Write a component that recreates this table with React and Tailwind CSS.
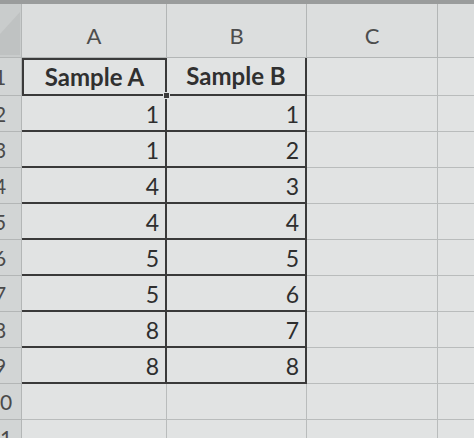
import React from "react";

const colA = ["1", "1", "4", "4", "5", "5", "8", "8"];
const colB = ["1", "2", "3", "4", "5", "6", "7", "8"];

const font = { fontFamily: "Lato, 'Open Sans', sans-serif" };

const RowNum = ({ n }) => (
  <div className="overflow-hidden bg-[#d2d5d5] border-r border-b border-[#b3b6b6] flex items-center">
    <div className="w-[44px] -ml-[22px] shrink-0 text-center text-[21px] text-[#4a4a4a]">{n}</div>
  </div>
);

const Plain = ({ last }) => (
  <div className={"bg-[#e1e3e3] border-b border-[#b9bcbc] " + (last ? "" : "border-r")} />
);

export default function App() {
  const rows = [];
  colA.forEach((a, i) => {
    rows.push(
      <React.Fragment key={i}>
        <RowNum n={i + 2} />
        <div className="bg-[#e1e3e3] border-b-2 border-r-2 border-b-[#3a3a3a] border-r-[#3a3a3a] flex items-center justify-end pr-[6px] pt-[2px] text-[23px] text-[#2e2e2e]">
          {a}
        </div>
        <div className="bg-[#e1e3e3] border-b-2 border-r-2 border-b-[#3a3a3a] border-r-[#3a3a3a] flex items-center justify-end pr-[6px] pt-[2px] text-[23px] text-[#2e2e2e]">
          {colB[i]}
        </div>
        <Plain />
        <Plain last />
      </React.Fragment>
    );
  });

  return (
    <div className="w-[474px] h-[438px] overflow-hidden bg-[#e1e3e3]" style={font}>
      <div className="h-[4px] bg-[#9a9c9c]" />
      <div className="grid grid-cols-[22px_145px_140px_131px_1fr] grid-rows-[54px_38px_repeat(10,36px)]">
        {/* column letters */}
        <div className="relative bg-[#c9cccc] border-r border-b border-[#b3b6b6] overflow-hidden">
          <svg className="absolute left-0 top-0" width="22" height="54">
            <polygon points="20,8 20,51 0,51 0,30" fill="#bfc2c2" />
          </svg>
        </div>
        <div className="bg-[#dcdede] border-r border-b border-[#b3b6b6] flex items-center justify-center text-[22px] text-[#4d4d4d] pt-[10px]">A</div>
        <div className="bg-[#dcdede] border-r border-b border-[#b3b6b6] flex items-center justify-center text-[22px] text-[#4d4d4d] pt-[10px]">B</div>
        <div className="bg-[#dcdede] border-r border-b border-[#b3b6b6] flex items-center justify-center text-[22px] text-[#4d4d4d] pt-[10px]">C</div>
        <div className="bg-[#dcdede] border-b border-[#b3b6b6]" />

        {/* row 1 headers */}
        <RowNum n={1} />
        <div className="relative bg-[#e1e3e3] border-2 border-[#3a3a3a] flex items-center justify-center font-bold text-[24px] text-[#303030]">
          Sample A
          <div className="absolute -right-[5px] -bottom-[5px] w-[7px] h-[7px] bg-[#3a3a3a] border border-[#e1e3e3]" />
        </div>
        <div className="bg-[#e1e3e3] border-b-2 border-r-2 border-b-[#3a3a3a] border-r-[#3a3a3a] flex items-center justify-center font-bold text-[24px] text-[#303030]">
          Sample B
        </div>
        <Plain />
        <Plain last />

        {rows}

        <RowNum n={10} />
        <Plain />
        <Plain />
        <Plain />
        <Plain last />
        <RowNum n={11} />
        <Plain />
        <Plain />
        <Plain />
        <Plain last />
      </div>
    </div>
  );
}
